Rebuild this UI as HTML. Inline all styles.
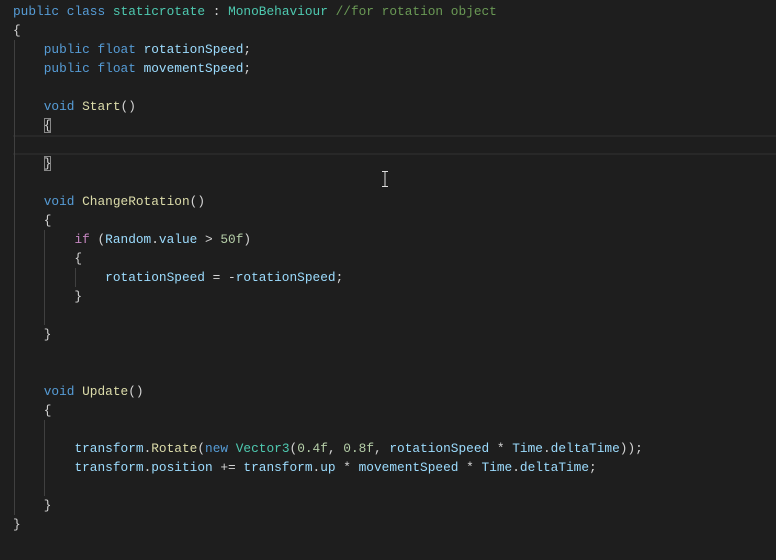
<!DOCTYPE html>
<html><head><meta charset="utf-8"><style>
html,body{margin:0;padding:0;background:#1e1e1e;width:776px;height:560px;overflow:hidden;position:relative}
.code{position:absolute;left:13px;top:1.5px;font-family:"Liberation Mono",monospace;font-size:12.8px;line-height:19px;color:#d4d4d4;white-space:pre}
.k{color:#569cd6}.t{color:#4ec9b0}.v{color:#9cdcfe}.f{color:#dcdcaa}.c{color:#6a9955}.n{color:#b5cea8}.p{color:#c586c0}
.g{position:absolute;width:1px;background:#404040}
.cur{position:absolute;left:13px;right:0;top:135px;height:16px;border-top:2px solid #282828;border-bottom:2px solid #282828}
.bm{outline:1px solid #888;outline-offset:-1px}
</style></head><body>
<div class="cur"></div>
<div class="g" style="left:14px;top:40px;height:475px"></div>
<div class="g" style="left:44px;top:230px;height:95px"></div>
<div class="g" style="left:75px;top:268px;height:19px"></div>
<div class="g" style="left:44px;top:420px;height:76px"></div>
<div class="code"><span class="k">public</span> <span class="k">class</span> <span class="t">staticrotate</span> : <span class="t">MonoBehaviour</span> <span class="c">//for rotation object</span>
{
    <span class="k">public</span> <span class="k">float</span> <span class="v">rotationSpeed</span>;
    <span class="k">public</span> <span class="k">float</span> <span class="v">movementSpeed</span>;

    <span class="k">void</span> <span class="f">Start</span>()
    <span class="bm">{</span>

    <span class="bm">}</span>

    <span class="k">void</span> <span class="f">ChangeRotation</span>()
    {
        <span class="p">if</span> (<span class="v">Random</span>.<span class="v">value</span> &gt; <span class="n">50f</span>)
        {
            <span class="v">rotationSpeed</span> = -<span class="v">rotationSpeed</span>;
        }

    }


    <span class="k">void</span> <span class="f">Update</span>()
    {

        <span class="v">transform</span>.<span class="f">Rotate</span>(<span class="k">new</span> <span class="t">Vector3</span>(<span class="n">0.4f</span>, <span class="n">0.8f</span>, <span class="v">rotationSpeed</span> * <span class="v">Time</span>.<span class="v">deltaTime</span>));
        <span class="v">transform</span>.<span class="v">position</span> += <span class="v">transform</span>.<span class="v">up</span> * <span class="v">movementSpeed</span> * <span class="v">Time</span>.<span class="v">deltaTime</span>;

    }
}</div>
<svg style="position:absolute;left:380px;top:171px" width="10" height="16"><path d="M2 0.5H8M5 0.5V15.5M2 15.5H8" stroke="#e0e0e0" stroke-width="1" fill="none"/></svg>
</body></html>
